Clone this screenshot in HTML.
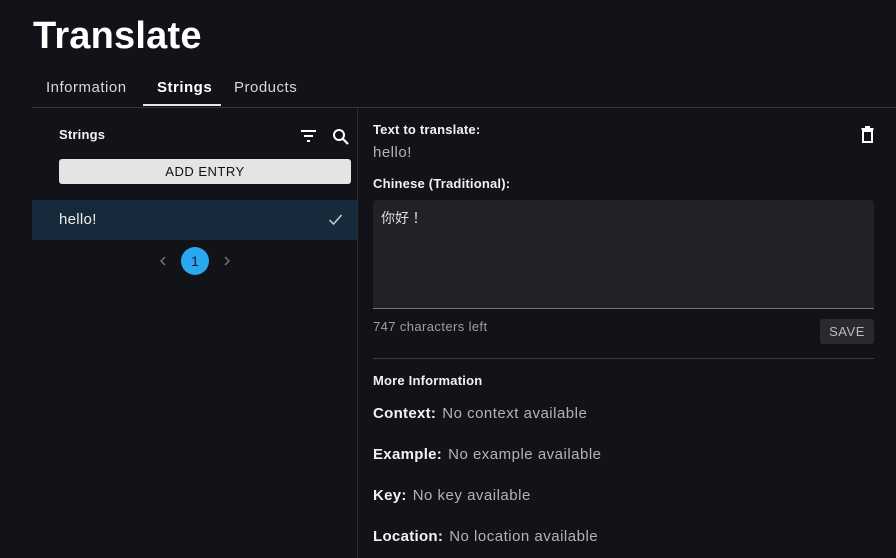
<!DOCTYPE html>
<html><head><meta charset="utf-8"><style>
*{box-sizing:border-box;margin:0;padding:0}
body{width:896px;height:558px;background:#121318;color:#fff;font-family:"Liberation Sans","Noto Sans CJK TC",sans-serif;position:relative;overflow:hidden}
.abs{position:absolute;white-space:nowrap}
h1{position:absolute;left:33px;top:15px;font-size:38px;font-weight:bold;letter-spacing:0.2px}
.tab{position:absolute;top:79px;font-size:15px;color:#d8d8d8;letter-spacing:0.5px}
.lbl{font-size:13px;font-weight:bold;color:#f2f2f2;letter-spacing:0.2px}
.val{font-size:15px;color:#b4b4b4;letter-spacing:0.5px}
.k{font-size:15px;font-weight:bold;color:#f2f2f2;margin-right:6px;letter-spacing:0.3px}
</style></head><body>
<h1>Translate</h1>
<div class="tab" style="left:46px">Information</div>
<div class="tab" style="left:157px;color:#fff;font-weight:bold">Strings</div>
<div class="tab" style="left:234px">Products</div>
<div class="abs" style="left:143px;top:104px;width:78px;height:2px;background:#e8e8e8"></div>
<div class="abs" style="left:32px;top:107px;width:864px;height:1px;background:#33353a"></div>
<div class="abs" style="left:357px;top:108px;width:1px;height:450px;background:#2c2e33"></div>

<div class="abs lbl" style="left:59px;top:127px">Strings</div>
<svg class="abs" style="left:300px;top:129px" width="17" height="14" viewBox="0 0 17 14"><path d="M1 2h15M4 7h9M7 12h3" stroke="#fff" stroke-width="2"/></svg>
<svg class="abs" style="left:332px;top:128px" width="18" height="18" viewBox="0 0 18 18"><circle cx="7" cy="7" r="5" stroke="#fff" stroke-width="2" fill="none"/><path d="M10.5 10.5L16 16" stroke="#fff" stroke-width="2.2"/></svg>
<div class="abs" style="left:59px;top:159px;width:292px;height:25px;background:#e4e4e4;border-radius:3px;color:#111;font-size:13px;text-align:center;line-height:25px;letter-spacing:0.5px">ADD ENTRY</div>
<div class="abs" style="left:32px;top:200px;width:325px;height:40px;background:#172a3b"></div>
<div class="abs" style="left:59px;top:211px;font-size:15px;color:#eee;letter-spacing:0.3px">hello!</div>
<svg class="abs" style="left:328px;top:213px" width="15" height="13" viewBox="0 0 15 13"><path d="M1.5 7l4 4 8-9" stroke="#ccc" stroke-width="1.5" fill="none"/></svg>
<svg class="abs" style="left:159px;top:255px" width="8" height="12" viewBox="0 0 8 12"><path d="M6 2L2 6l4 4" stroke="#777" stroke-width="1.4" fill="none"/></svg>
<div class="abs" style="left:181px;top:247px;width:28px;height:28px;border-radius:50%;background:#29a8f0;color:#0c1a2a;font-size:14px;text-align:center;line-height:28px">1</div>
<svg class="abs" style="left:223px;top:255px" width="8" height="12" viewBox="0 0 8 12"><path d="M2 2l4 4-4 4" stroke="#777" stroke-width="1.4" fill="none"/></svg>

<div class="abs lbl" style="left:373px;top:122px">Text to translate:</div>
<svg class="abs" style="left:861px;top:126px" width="13" height="17" viewBox="0 0 13 17"><path d="M4 1h5M0.5 3h12" stroke="#fff" stroke-width="2"/><rect x="2" y="5" width="9" height="11" stroke="#fff" stroke-width="2" fill="none"/></svg>
<div class="abs val" style="left:373px;top:144px">hello!</div>
<div class="abs lbl" style="left:373px;top:176px">Chinese (Traditional):</div>
<div class="abs" style="left:373px;top:200px;width:501px;height:109px;background:#212227;border-radius:4px 4px 0 0;border-bottom:1px solid #777"></div>
<div class="abs" style="left:381px;top:208px;font-size:14px;color:#ddd">你好！</div>
<div class="abs" style="left:373px;top:319px;font-size:13px;color:#a0a0a0;letter-spacing:0.4px">747 characters left</div>
<div class="abs" style="left:820px;top:319px;width:54px;height:25px;background:#2a2b30;border-radius:3px;color:#bbb;font-size:13px;text-align:center;line-height:25px;letter-spacing:0.5px">SAVE</div>
<div class="abs" style="left:373px;top:358px;width:501px;height:1px;background:#3a3c41"></div>
<div class="abs lbl" style="left:373px;top:373px">More Information</div>
<div class="abs val" style="left:373px;top:405px"><span class="k">Context:</span>No context available</div>
<div class="abs val" style="left:373px;top:446px"><span class="k">Example:</span>No example available</div>
<div class="abs val" style="left:373px;top:487px"><span class="k">Key:</span>No key available</div>
<div class="abs val" style="left:373px;top:528px"><span class="k">Location:</span>No location available</div>
</body></html>
